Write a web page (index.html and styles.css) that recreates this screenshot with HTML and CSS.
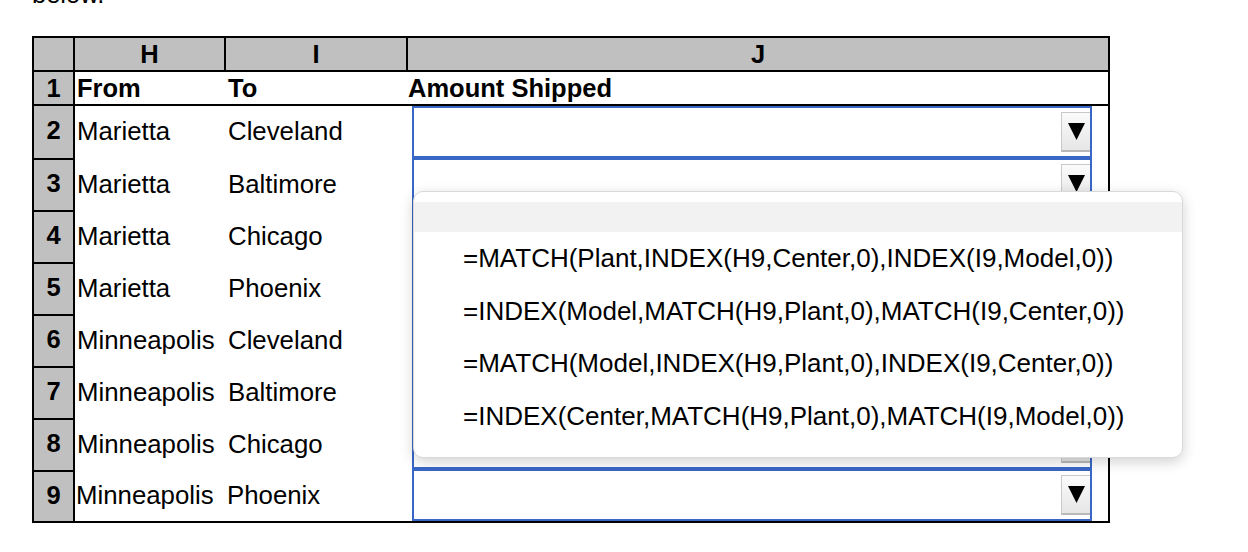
FILE: index.html
```html
<!DOCTYPE html>
<html lang="en">
<head>
<meta charset="utf-8">
<title>Sheet</title>
<link rel="stylesheet" href="styles.css">
</head>
<body>
<p class="lead">below.</p>
<div class="sheet">
  <div class="corner"></div>
  <div class="hdr sep">H</div>
  <div class="hdr sep">I</div>
  <div class="hdr">J</div>

  <div class="rn first">1</div>
  <div class="cell bold first">From</div>
  <div class="cell bold first">To</div>
  <div class="cell bold first jcell">Amount Shipped</div>

  <div class="jstack">
    <div class="dd"><span class="btn"><svg width="17" height="17" viewBox="0 0 17 17"><polygon points="0,0 17,0 8.5,17" fill="#000"/></svg></span></div>
    <div class="dd"><span class="btn"><svg width="17" height="17" viewBox="0 0 17 17"><polygon points="0,0 17,0 8.5,17" fill="#000"/></svg></span></div>
    <div class="dd"><span class="btn"><svg width="17" height="17" viewBox="0 0 17 17"><polygon points="0,0 17,0 8.5,17" fill="#000"/></svg></span></div>
    <div class="dd"><span class="btn"><svg width="17" height="17" viewBox="0 0 17 17"><polygon points="0,0 17,0 8.5,17" fill="#000"/></svg></span></div>
    <div class="dd"><span class="btn"><svg width="17" height="17" viewBox="0 0 17 17"><polygon points="0,0 17,0 8.5,17" fill="#000"/></svg></span></div>
    <div class="dd"><span class="btn"><svg width="17" height="17" viewBox="0 0 17 17"><polygon points="0,0 17,0 8.5,17" fill="#000"/></svg></span></div>
    <div class="dd"><span class="btn"><svg width="17" height="17" viewBox="0 0 17 17"><polygon points="0,0 17,0 8.5,17" fill="#000"/></svg></span></div>
    <div class="dd"><span class="btn"><svg width="17" height="17" viewBox="0 0 17 17"><polygon points="0,0 17,0 8.5,17" fill="#000"/></svg></span></div>

    <div class="menu">
      <div class="menu-band"></div>
      <div class="menu-item">=MATCH(Plant,INDEX(H9,Center,0),INDEX(I9,Model,0))</div>
      <div class="menu-item">=INDEX(Model,MATCH(H9,Plant,0),MATCH(I9,Center,0))</div>
      <div class="menu-item">=MATCH(Model,INDEX(H9,Plant,0),INDEX(I9,Center,0))</div>
      <div class="menu-item">=INDEX(Center,MATCH(H9,Plant,0),MATCH(I9,Model,0))</div>
    </div>
  </div>

  <div class="rn">2</div>
  <div class="cell">Marietta</div>
  <div class="cell">Cleveland</div>

  <div class="rn">3</div>
  <div class="cell">Marietta</div>
  <div class="cell">Baltimore</div>

  <div class="rn">4</div>
  <div class="cell">Marietta</div>
  <div class="cell">Chicago</div>

  <div class="rn">5</div>
  <div class="cell">Marietta</div>
  <div class="cell">Phoenix</div>

  <div class="rn">6</div>
  <div class="cell">Minneapolis</div>
  <div class="cell">Cleveland</div>

  <div class="rn">7</div>
  <div class="cell">Minneapolis</div>
  <div class="cell">Baltimore</div>

  <div class="rn">8</div>
  <div class="cell">Minneapolis</div>
  <div class="cell">Chicago</div>

  <div class="rn last">9</div>
  <div class="cell tight">Minneapolis</div>
  <div class="cell tight">Phoenix</div>
</div>
</body>
</html>
```

FILE: styles.css
```css
html, body {
  margin: 0;
  padding: 0;
  background: #ffffff;
}

body {
  font-family: "Liberation Sans", Arial, Helvetica, sans-serif;
  color: #000;
}

.lead {
  margin: -21px 0 0 32px;
  font-size: 25.5px;
  line-height: 30px;
}

.sheet {
  margin: 27px 0 0 32px;
  width: fit-content;
  display: grid;
  grid-template-columns: 41px 151px 182px 700px;
  grid-template-rows: 34px 34px 54px repeat(6, 52px) 49px;
  border: 2px solid #000;
  font-size: 25.8px;
}

.sheet > div {
  box-sizing: border-box;
}

.corner {
  background: #c0c0c0;
  border-right: 2px solid #000;
  border-bottom: 2px solid #000;
}

.hdr {
  background: #c0c0c0;
  border-bottom: 2px solid #000;
  font-weight: bold;
  font-size: 25.5px;
  display: flex;
  align-items: center;
  justify-content: center;
}

.hdr.sep {
  border-right: 2px solid #000;
}

.rn {
  background: #c0c0c0;
  border-right: 2px solid #000;
  border-bottom: 2px solid #000;
  font-weight: bold;
  font-size: 25.5px;
  display: flex;
  align-items: center;
  justify-content: center;
  padding-bottom: 4px;
}

.rn.first {
  padding-bottom: 0;
}

.rn.last {
  border-bottom: none;
  padding-bottom: 2px;
}

.cell {
  display: flex;
  align-items: center;
  padding-left: 2px;
  padding-bottom: 4px;
  white-space: nowrap;
}

.cell.tight {
  padding-left: 1px;
  padding-bottom: 2px;
}

.cell.first {
  border-bottom: 2px solid #000;
  padding-bottom: 0;
  font-size: 25.5px;
}

.cell.jcell {
  padding-left: 0;
}

.bold {
  font-weight: bold;
}

.jstack {
  grid-column: 4;
  grid-row: 3 / 11;
  position: relative;
  display: flex;
  flex-direction: column;
}

.dd {
  box-sizing: border-box;
  margin-left: 4px;
  width: 680px;
  height: 51.875px;
  flex: none;
  border: 2px solid #3967c6;
  display: flex;
  justify-content: flex-end;
  align-items: center;
}

.btn {
  box-sizing: border-box;
  width: 29px;
  height: 40px;
  border: 1px solid #c9c9c9;
  border-right: none;
  border-bottom: 2px solid #b9b9b9;
  background: linear-gradient(#fbfbfb, #e6e6e6);
  display: flex;
  align-items: center;
  justify-content: center;
}

.btn svg {
  display: block;
}

.menu {
  position: absolute;
  left: 5px;
  top: 85px;
  width: 770px;
  height: 267px;
  box-sizing: border-box;
  background: #ffffff;
  border: 1px solid #d9d9d9;
  border-radius: 10px;
  box-shadow: 0 4px 14px rgba(0, 0, 0, 0.18);
  padding-top: 10px;
  overflow: hidden;
}

.menu-band {
  height: 30px;
  background: #f2f2f2;
}

.menu-item {
  height: 52.5px;
  line-height: 52.5px;
  padding-left: 49px;
  font-size: 26px;
  white-space: nowrap;
}
```
